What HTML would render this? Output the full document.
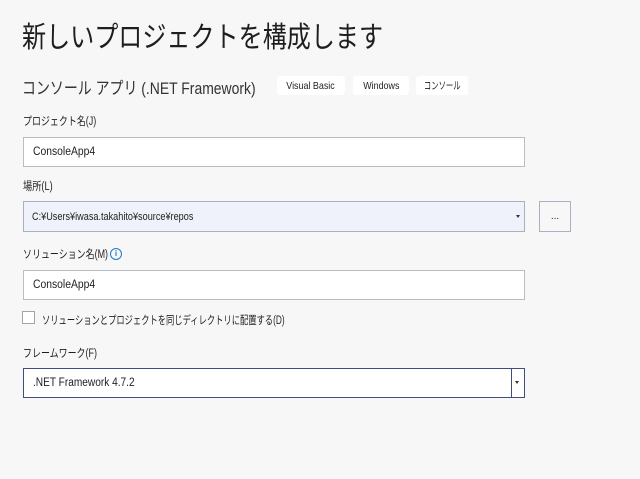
<!DOCTYPE html>
<html><head><meta charset="utf-8"><style>
body{margin:0;width:640px;height:479px;background:#f7f7f7;font-family:"Liberation Sans","Noto Sans CJK JP",sans-serif;color:#1e1e1e;position:relative;overflow:hidden}
.a{position:absolute;white-space:nowrap;transform-origin:0 0}
.lbl{font-size:11.5px;color:#1e1e1e}
.box{position:absolute;box-sizing:border-box;background:#fff;border:1px solid #b9bcc4;font-size:11.5px;padding-left:9px;display:flex;align-items:center;white-space:nowrap}
.box span{display:inline-block;transform-origin:0 50%}
.chip{position:absolute;top:76px;height:19px;background:#fff;border-radius:3px;font-size:10.5px;display:flex;align-items:center;justify-content:center;white-space:nowrap}
.chip span{display:inline-block;transform:scaleX(.85)}
.arr{position:absolute;width:0;height:0;border-left:2.5px solid transparent;border-right:2.5px solid transparent;border-top:3px solid #333}
</style></head><body>
<div class="a" style="left:22px;top:14px;font-size:29px;color:#1e1e1e;transform:scaleX(.83)">新しいプロジェクトを構成します</div>
<div class="a" style="left:22px;top:74px;font-size:17px;color:#333;transform:scaleX(.82)">コンソール アプリ (.NET Framework)</div>
<div class="chip" style="left:277px;width:68px"><span>Visual Basic</span></div>
<div class="chip" style="left:353px;width:56px"><span>Windows</span></div>
<div class="chip" style="left:416px;width:52px"><span style="transform:scaleX(.7)">コンソール</span></div>
<div class="a lbl" style="left:23px;top:113px;transform:scaleX(.78)">プロジェクト名(J)</div>
<div class="box" style="left:23px;top:137px;width:502px;height:30px"><span style="transform:scaleX(.9)">ConsoleApp4</span></div>
<div class="a lbl" style="left:23px;top:178px;transform:scaleX(.8)">場所(L)</div>
<div class="box" style="left:23px;top:201px;width:502px;height:31px;background:#eff2fa;border-color:#a9b0c2;font-size:11px;padding-left:8px"><span style="transform:scaleX(.83)">C:¥Users¥iwasa.takahito¥source¥repos</span></div>
<div class="arr" style="left:516px;top:215px"></div>
<div class="box" style="left:539px;top:201px;width:32px;height:31px;background:#f7f7f7;border-color:#a9b0c2;justify-content:center;padding:0;font-size:10px">...</div>
<div class="a lbl" style="left:23px;top:246px;transform:scaleX(.78)">ソリューション名(M)</div>
<div class="a" style="left:110px;top:248px;width:10px;height:10px;border:1.5px solid #1f7ac6;border-radius:50%;font-size:8px;color:#1f7ac6;text-align:center;line-height:10px;font-weight:bold">i</div>
<div class="box" style="left:23px;top:270px;width:502px;height:30px"><span style="transform:scaleX(.9)">ConsoleApp4</span></div>
<div class="a" style="left:22px;top:311px;width:13px;height:13px;border:1px solid #a0a4ac;background:#fff;box-sizing:border-box"></div>
<div class="a lbl" style="left:42px;top:312px;transform:scaleX(.72)">ソリューションとプロジェクトを同じディレクトリに配置する(D)</div>
<div class="a lbl" style="left:23px;top:345px;transform:scaleX(.78)">フレームワーク(F)</div>
<div class="box" style="left:23px;top:368px;width:502px;height:30px;border-color:#3f4d80"><span style="transform:scaleX(.88)">.NET Framework 4.7.2</span></div>
<div class="a" style="left:511px;top:369px;width:1px;height:28px;background:#3f4d80"></div>
<div class="arr" style="left:515px;top:381px"></div>
</body></html>
